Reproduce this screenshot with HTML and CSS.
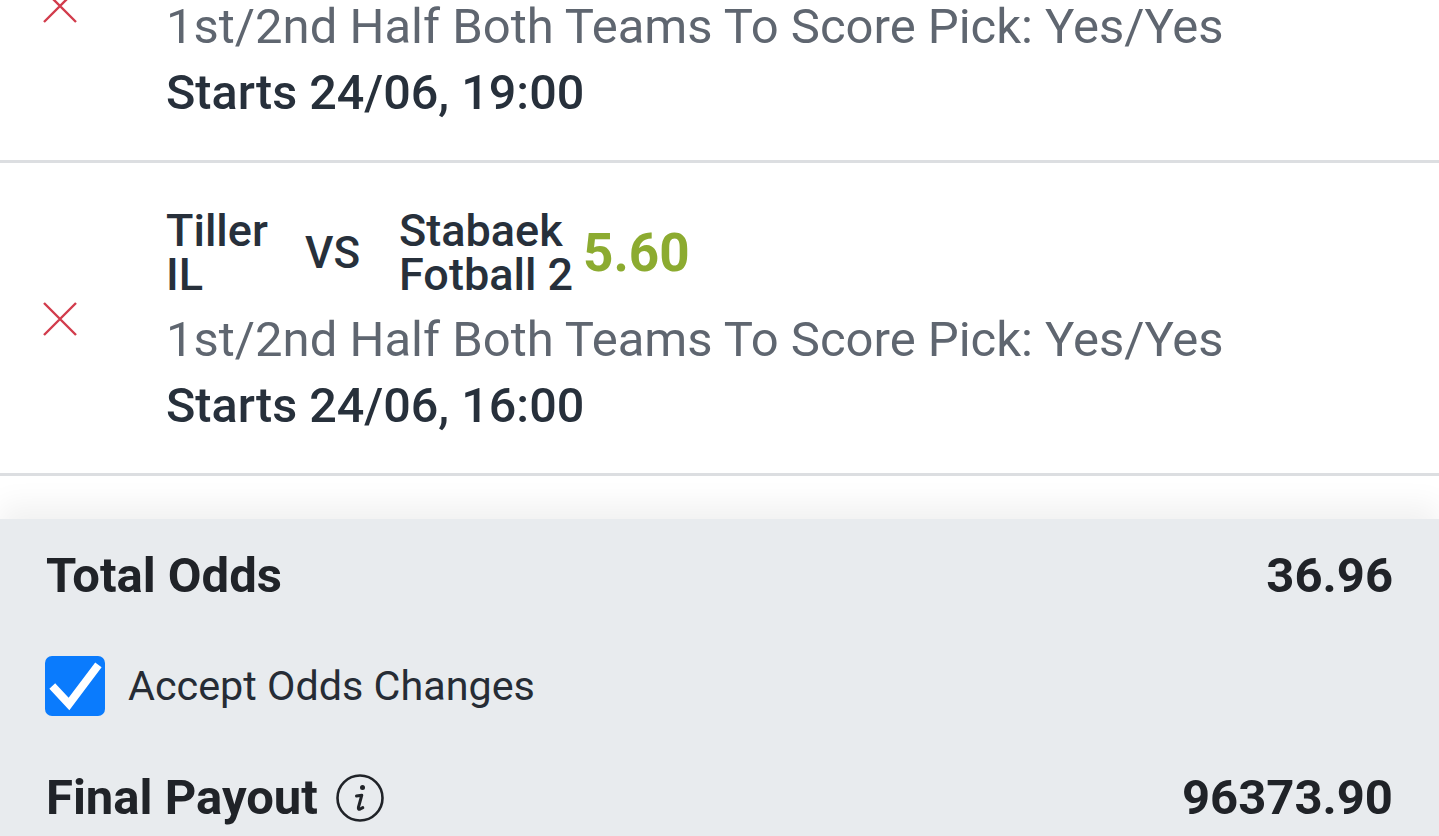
FILE: index.html
```html
<!DOCTYPE html>
<html>
<head>
<meta charset="utf-8">
<link rel="stylesheet" href="styles.css">
</head>
<body>
<div class="screen">
  <div class="list">
    <div class="item">
      <div class="remove">
        <svg class="x-icon" viewBox="0 0 36 36"><path d="M2 2 L34 34 M34 2 L2 34"/></svg>
      </div>
      <div class="content">
        <div class="teams teams-hidden"></div>
        <div class="market">1st/2nd Half Both Teams To Score Pick: Yes/Yes</div>
        <div class="start">Starts 24/06, 19:00</div>
      </div>
    </div>
    <div class="item">
      <div class="remove">
        <svg class="x-icon" viewBox="0 0 36 36"><path d="M2 2 L34 34 M34 2 L2 34"/></svg>
      </div>
      <div class="content">
        <div class="teams">
          <div class="team home">Tiller IL</div>
          <div class="vs">VS</div>
          <div class="team away">Stabaek Fotball 2</div>
          <div class="odds">5.60</div>
        </div>
        <div class="market">1st/2nd Half Both Teams To Score Pick: Yes/Yes</div>
        <div class="start">Starts 24/06, 16:00</div>
      </div>
    </div>
  </div>
  <div class="spacer"></div>
  <div class="summary">
    <div class="row">
      <div class="label">Total Odds</div>
      <div class="value">36.96</div>
    </div>
    <div class="row check-row">
      <div class="checkbox">
        <svg viewBox="0 0 60 60"><path d="M10 33 L24 48 L51 12"/></svg>
      </div>
      <div class="check-label">Accept Odds Changes</div>
    </div>
    <div class="row">
      <div class="label with-icon">Final Payout
        <svg class="info" viewBox="0 0 48 48"><circle cx="24" cy="24" r="22.5"/><circle class="dot" cx="26.5" cy="13.5" r="2.5"/><path class="stem" d="M20.5 22 L25.8 21.2 L22.4 33.5 Q22 35.8 24.2 35 L26.8 33.6"/></svg>
      </div>
      <div class="value">96373.90</div>
    </div>
  </div>
</div>
</body>
</html>
```
FILE: styles.css
```css
* { box-sizing: border-box; }
html, body {
  margin: 0;
  padding: 0;
  background: #ffffff;
}
body {
  font-family: Roboto, "Noto Sans", sans-serif;
  width: 1439px;
  height: 836px;
  overflow: hidden;
}
.screen {
  width: 1439px;
  height: 836px;
  overflow: hidden;
  display: flex;
  flex-direction: column;
}
.list {
  margin-top: -150px;
  background: #ffffff;
}
.item {
  display: flex;
  align-items: center;
  padding: 46px 0 34px;
  border-bottom: 3px solid #dcdee1;
}
.remove {
  width: 166px;
  flex: none;
  padding-left: 42px;
  display: flex;
}
.x-icon {
  width: 36px;
  height: 36px;
  margin-bottom: 10px;
}
.x-icon path {
  stroke: #d23c4c;
  stroke-width: 2.4;
  fill: none;
}
.content {
  display: flex;
  flex-direction: column;
}
.teams {
  display: flex;
  align-items: center;
  height: 88px;
  margin-bottom: 10px;
  color: #27303b;
  font-weight: 500;
}
.team {
  font-size: 45px;
  line-height: 44px;
}
.home {
  width: 110px;
}
.vs {
  font-size: 44px;
  margin-left: 29px;
  margin-right: 39px;
}
.away {
  width: 180px;
}
.odds {
  margin-left: 4px;
  font-size: 53px;
  font-weight: 700;
  color: #8cab30;
}
.market {
  font-size: 49px;
  line-height: 66px;
  color: #5f6670;
  white-space: nowrap;
}
.start {
  font-size: 48.5px;
  line-height: 66px;
  font-weight: 500;
  color: #27303b;
}
.spacer {
  height: 43px;
  background: #ffffff;
}
.summary {
  flex: 1;
  background: #e8ebee;
  padding: 26px 46px 0;
  box-shadow: 0 -14px 28px rgba(0, 0, 0, 0.06);
  color: #202328;
}
.row {
  display: flex;
  justify-content: space-between;
  align-items: center;
  height: 60px;
}
.row + .row {
  margin-top: 51px;
}
.label {
  font-size: 49px;
  font-weight: 700;
}
.with-icon {
  display: flex;
  align-items: center;
}
.value {
  font-size: 49px;
  font-weight: 700;
}
.check-row {
  justify-content: flex-start;
}
.checkbox {
  width: 60px;
  height: 60px;
  border-radius: 7px;
  background: #0a7bfd;
  margin-left: -1px;
}
.checkbox svg {
  width: 60px;
  height: 60px;
  display: block;
}
.checkbox path {
  stroke: #ffffff;
  stroke-width: 8;
  fill: none;
  stroke-linecap: square;
  stroke-linejoin: miter;
}
.check-label {
  margin-left: 23px;
  font-size: 41.3px;
  font-weight: 400;
  color: #262c35;
}
.info {
  width: 48px;
  height: 48px;
  margin-left: 18px;
  margin-top: 2px;
}
.info circle {
  fill: none;
  stroke: #202328;
  stroke-width: 2.6;
}
.info circle.dot {
  fill: #202328;
  stroke: none;
}
.info .stem {
  fill: none;
  stroke: #202328;
  stroke-width: 3;
  stroke-linecap: round;
  stroke-linejoin: round;
}
```
